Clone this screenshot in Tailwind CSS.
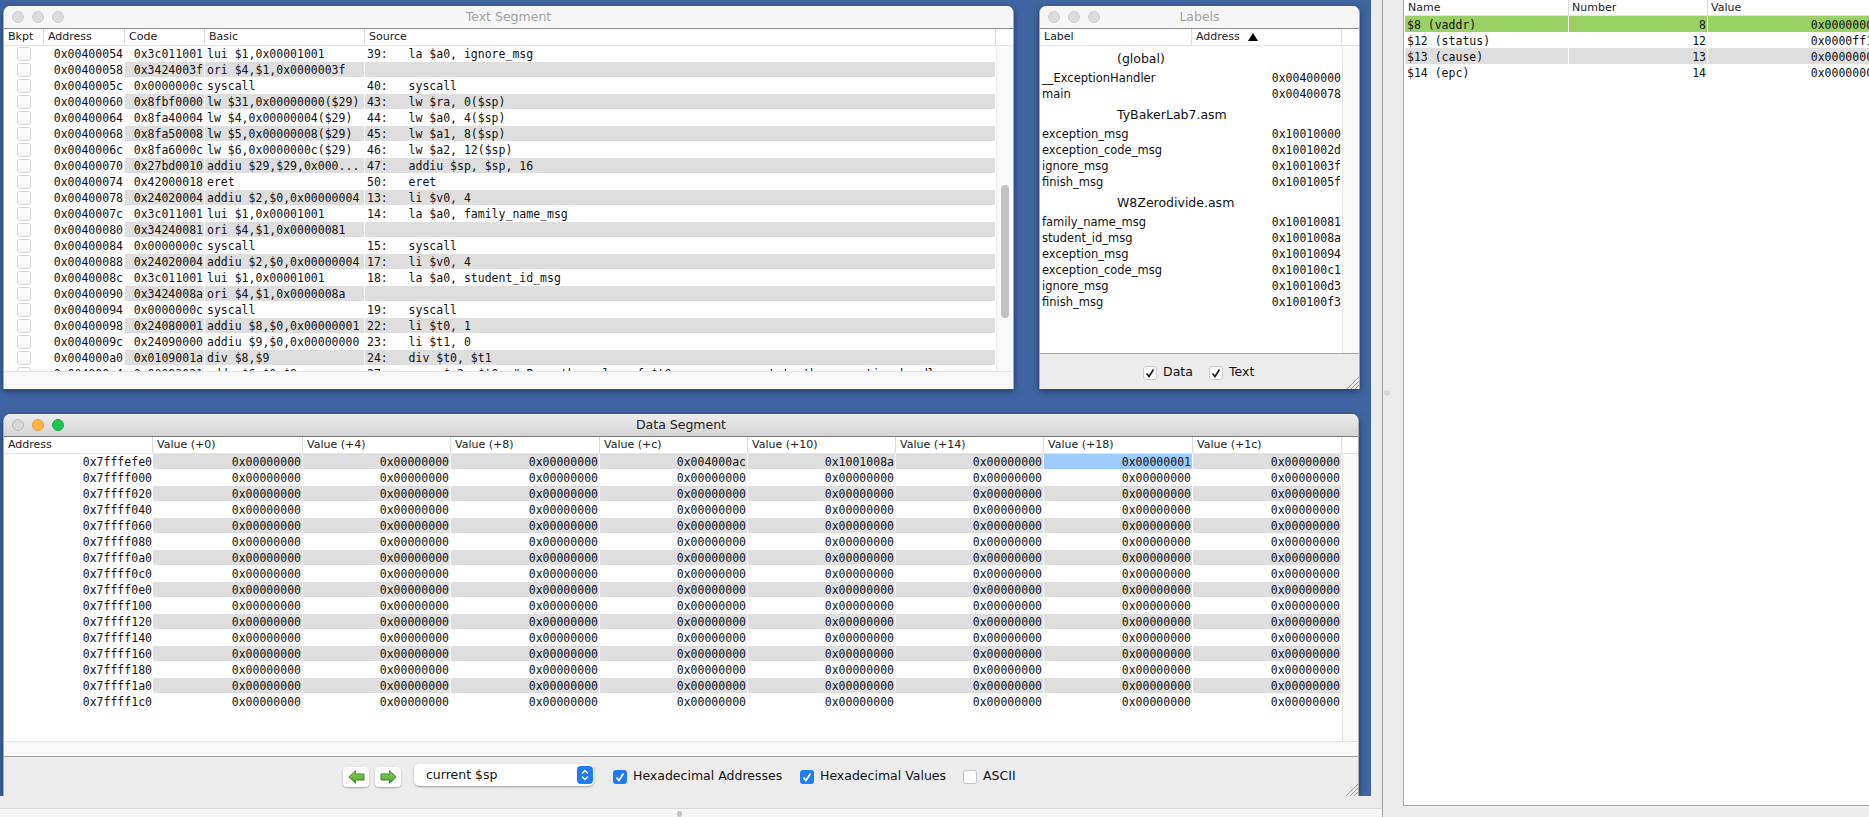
<!DOCTYPE html>
<html>
  <head>
    <meta charset="UTF-8" />
    <title>MARS</title>
    <script src="https://cdn.jsdelivr.net/npm/@tailwindcss/browser@4"></script>
  </head>
  <body class="bg-[#ececec] overflow-hidden">
    <div class="relative w-[1869px] h-[817px] flex font-['DejaVu_Sans',sans-serif] text-[#111]">
      <!-- left side: desktop pane and split bar below it -->
      <div class="w-[1383px] h-[817px] flex flex-col border-r border-[#9f9f9f]">
        <div id="desktop" class="relative w-[1371px] h-[796px] bg-[#3f66a3] overflow-hidden">

          <!-- Text Segment -->
          <section class="absolute left-[3px] top-[6px] w-[1011px] h-[383px] flex flex-col bg-white border-x border-[#a8a8a8] rounded-t-[7px] shadow-[0_2px_7px_rgba(0,0,0,0.45)] overflow-hidden">
            <header class="relative h-[23px] shrink-0 bg-[#f6f6f6] border-b border-[#8c8c8c] flex items-center justify-center text-[12.5px] text-[#a3a3a3]">
              <div class="absolute left-[8px] top-[5px] flex gap-2">
                <span class="w-3 h-3 rounded-full bg-[#dcdcdc] border border-[#cbcbcb]"></span>
                <span class="w-3 h-3 rounded-full bg-[#dcdcdc] border border-[#cbcbcb]"></span>
                <span class="w-3 h-3 rounded-full bg-[#dcdcdc] border border-[#cbcbcb]"></span>
              </div>
              Text Segment
            </header>
            <div class="h-[17px] shrink-0 flex border-b border-[#e4e4e4] text-[11px] leading-4 text-[#222]">
              <div class="w-[40px] pl-1 border-r border-[#dcdcdc]">Bkpt</div>
              <div class="w-[81px] pl-1 border-r border-[#dcdcdc]">Address</div>
              <div class="w-[80px] pl-1 border-r border-[#dcdcdc]">Code</div>
              <div class="w-[160px] pl-1 border-r border-[#dcdcdc]">Basic</div>
              <div class="w-[631px] pl-1 border-r border-[#dcdcdc]">Source</div>
            </div>
            <div class="relative h-[326px] shrink-0 overflow-hidden border-b border-[#e4e4e4]">
              <div id="textRows" class="w-[992px] font-['DejaVu_Sans_Mono',monospace] text-[11.5px] leading-4"></div>
              <div class="absolute right-0 top-0 bottom-0 w-[17px] bg-[#f9f9f9] border-l border-[#eeeeee]">
                <div class="absolute left-[4px] top-[139px] w-[8px] h-[133px] rounded bg-[#c2c2c2]"></div>
              </div>
            </div>
            <div class="flex-1 bg-[#f8f8f8]"></div>
          </section>

          <!-- Labels -->
          <section class="absolute left-[1039px] top-[6px] w-[321px] h-[383px] flex flex-col bg-white border-x border-[#a8a8a8] rounded-t-[7px] shadow-[0_2px_7px_rgba(0,0,0,0.45)] overflow-hidden">
            <header class="relative h-[23px] shrink-0 bg-[#f6f6f6] border-b border-[#8c8c8c] flex items-center justify-center text-[12.5px] text-[#a3a3a3]">
              <div class="absolute left-[8px] top-[5px] flex gap-2">
                <span class="w-3 h-3 rounded-full bg-[#dcdcdc] border border-[#cbcbcb]"></span>
                <span class="w-3 h-3 rounded-full bg-[#dcdcdc] border border-[#cbcbcb]"></span>
                <span class="w-3 h-3 rounded-full bg-[#dcdcdc] border border-[#cbcbcb]"></span>
              </div>
              Labels
            </header>
            <div class="h-[17px] shrink-0 flex border-b border-[#e4e4e4] text-[11px] leading-4 text-[#222]">
              <div class="w-[152px] pl-1 border-r border-[#dcdcdc]">Label</div>
              <div class="w-[150px] pl-1 border-r border-[#dcdcdc] flex items-center gap-2">Address <span class="w-0 h-0 border-x-[5px] border-x-transparent border-b-[8px] border-b-black"></span></div>
            </div>
            <div class="h-[308px] shrink-0 flex border-b border-[#a6a6a6]">
              <div id="labelRows" class="w-[303px] border-r border-[#e8e8e8] text-[11.5px] leading-4"></div>
              <div class="flex-1 bg-[#f9f9f9]"></div>
            </div>
            <div class="relative flex-1 bg-[#ececec] flex items-center pl-[103px] text-[12.5px] pt-[2px]">
              <span class="w-[14px] h-[14px] rounded-[3px] bg-white border border-[#c9c9c9] flex items-center justify-center">
                <svg viewBox="0 0 12 12" class="w-3 h-3"><path d="M2.5 6.5 L5 9.5 L9.5 2.5" fill="none" stroke="#222" stroke-width="1.7"/></svg>
              </span>
              <span class="ml-[6px] w-[40px]">Data</span>
              <span class="ml-[6px] w-[14px] h-[14px] rounded-[3px] bg-white border border-[#c9c9c9] flex items-center justify-center">
                <svg viewBox="0 0 12 12" class="w-3 h-3"><path d="M2.5 6.5 L5 9.5 L9.5 2.5" fill="none" stroke="#222" stroke-width="1.7"/></svg>
              </span>
              <span class="ml-[6px]">Text</span>
              <svg viewBox="0 0 12 12" class="absolute right-0 bottom-0 w-3 h-3"><path d="M0 12 L12 0 M4 12 L12 4 M8 12 L12 8" stroke="#9a9a9a" stroke-width="1"/></svg>
            </div>
          </section>

          <!-- Data Segment -->
          <section class="absolute left-[3px] top-[414px] w-[1356px] h-[382px] flex flex-col bg-white border-x border-[#a8a8a8] rounded-t-[7px] shadow-[0_2px_7px_rgba(0,0,0,0.45)] overflow-hidden">
            <header class="relative h-[23px] shrink-0 bg-gradient-to-b from-[#ededed] to-[#d4d4d4] border-b border-[#777] flex items-center justify-center text-[12.5px] text-[#222]">
              <div class="absolute left-[8px] top-[5px] flex gap-2">
                <span class="w-3 h-3 rounded-full bg-[#d6d6d6] border border-[#bcbcbc]"></span>
                <span class="w-3 h-3 rounded-full bg-[#fdb53f] border border-[#e5a136]"></span>
                <span class="w-3 h-3 rounded-full bg-[#1cc653] border border-[#18ae48]"></span>
              </div>
              Data Segment
            </header>
            <div class="h-[17px] shrink-0 grid grid-cols-[149px_150px_148px_149px_148px_148px_148px_149px_149px] border-b border-[#e4e4e4] text-[11px] leading-4 text-[#222]">
              <div class="pl-1 border-r border-[#dcdcdc]">Address</div>
              <div class="pl-1 border-r border-[#dcdcdc]">Value (+0)</div>
              <div class="pl-1 border-r border-[#dcdcdc]">Value (+4)</div>
              <div class="pl-1 border-r border-[#dcdcdc]">Value (+8)</div>
              <div class="pl-1 border-r border-[#dcdcdc]">Value (+c)</div>
              <div class="pl-1 border-r border-[#dcdcdc]">Value (+10)</div>
              <div class="pl-1 border-r border-[#dcdcdc]">Value (+14)</div>
              <div class="pl-1 border-r border-[#dcdcdc]">Value (+18)</div>
              <div class="pl-1 border-r border-[#dcdcdc]">Value (+1c)</div>
            </div>
            <div class="h-[288px] shrink-0 flex border-b border-[#e4e4e4]">
              <div id="dataRows" class="w-[1339px] border-r border-[#e4e4e4] font-['DejaVu_Sans_Mono',monospace] text-[11.5px] leading-4"></div>
              <div class="flex-1 bg-[#f9f9f9]"></div>
            </div>
            <div class="h-[15px] shrink-0 bg-[#f8f8f8] border-b border-[#a6a6a6]"></div>
            <div class="relative flex-1 bg-[#ececec] flex items-center pl-[339px] text-[12.5px]">
              <button class="mt-px w-[26px] h-[20px] rounded-[4px] bg-white shadow-[0_1px_2px_rgba(0,0,0,0.3)] flex items-center justify-center">
                <svg viewBox="0 0 17 14" class="w-[17px] h-[14px]"><defs><linearGradient id="arrowLeft" x1="0" y1="0" x2="0" y2="1"><stop offset="0" stop-color="#93d263"/><stop offset="1" stop-color="#4f9f2d"/></linearGradient></defs><path d="M0.8 7 L7.5 0.8 V4 H16 V10 H7.5 V13.2 Z" fill="url(#arrowLeft)" stroke="#3f8a25" stroke-width="1"/></svg>
              </button>
              <button class="mt-px ml-[6px] w-[26px] h-[20px] rounded-[4px] bg-white shadow-[0_1px_2px_rgba(0,0,0,0.3)] flex items-center justify-center">
                <svg viewBox="0 0 17 14" class="w-[17px] h-[14px]"><defs><linearGradient id="arrowRight" x1="0" y1="0" x2="0" y2="1"><stop offset="0" stop-color="#93d263"/><stop offset="1" stop-color="#4f9f2d"/></linearGradient></defs><path d="M16.2 7 L9.5 0.8 V4 H1 V10 H9.5 V13.2 Z" fill="url(#arrowRight)" stroke="#3f8a25" stroke-width="1"/></svg>
              </button>
              <div class="relative ml-[13px] -mt-[3px] w-[180px] h-[22px] rounded-[5px] bg-white shadow-[0_1px_2px_rgba(0,0,0,0.35)] pl-[12px] leading-[22px]">
                current $sp
                <span class="absolute right-[1px] top-[2px] w-[16px] h-[18px] rounded-[4px] bg-[#1e7cf5] flex items-center justify-center">
                  <svg viewBox="0 0 10 14" class="w-[10px] h-[14px]"><path d="M2 5.5 L5 2.5 L8 5.5 M2 8.5 L5 11.5 L8 8.5" fill="none" stroke="white" stroke-width="1.5"/></svg>
                </span>
              </div>
              <span class="ml-[19px] w-[14px] h-[14px] rounded-[3px] bg-[#1e7cf5] flex items-center justify-center">
                <svg viewBox="0 0 12 12" class="w-3 h-3"><path d="M2.5 6.5 L5 9.5 L9.5 2.5" fill="none" stroke="white" stroke-width="1.7"/></svg>
              </span>
              <span class="ml-[6px] w-[167px] whitespace-nowrap">Hexadecimal Addresses</span>
              <span class="w-[14px] h-[14px] rounded-[3px] bg-[#1e7cf5] flex items-center justify-center">
                <svg viewBox="0 0 12 12" class="w-3 h-3"><path d="M2.5 6.5 L5 9.5 L9.5 2.5" fill="none" stroke="white" stroke-width="1.7"/></svg>
              </span>
              <span class="ml-[6px] w-[143px] whitespace-nowrap">Hexadecimal Values</span>
              <span class="w-[14px] h-[14px] rounded-[3px] bg-white border border-[#c4c4c4]"></span>
              <span class="ml-[6px]">ASCII</span>
              <svg viewBox="0 0 12 12" class="absolute right-0 bottom-0 w-3 h-3"><path d="M0 12 L12 0 M4 12 L12 4 M8 12 L12 8" stroke="#9a9a9a" stroke-width="1"/></svg>
            </div>
          </section>
        </div>
        <div class="h-[13px] border-b border-[#d9d9d9]"></div>
        <div class="relative flex-1 bg-[#f5f5f5]">
          <span class="absolute left-[677px] top-[2px] w-[5px] h-[6px] rounded-full bg-[#c4c4c4]"></span>
        </div>
      </div>
      <span class="absolute left-[1384px] top-[390px] w-[6px] h-[6px] rounded-full bg-[#d6d6d6]"></span>

      <!-- right side: coprocessor 0 registers -->
      <div class="ml-[20px] flex-1 h-[806px] pl-px bg-white border-l border-b border-[#a9a9a9] overflow-hidden">
        <div class="h-[16px] grid grid-cols-[164px_139px_174px] w-[477px] text-[11px] leading-4 text-[#222] border-b border-[#e4e4e4]">
          <div class="pl-[3px] border-r border-[#dcdcdc]">Name</div>
          <div class="pl-[3px] border-r border-[#dcdcdc]">Number</div>
          <div class="pl-[3px]">Value</div>
        </div>
        <div id="regRows" class="w-[477px] font-['DejaVu_Sans_Mono',monospace] text-[11.5px] leading-[18px]"></div>
      </div>
    </div>

    <script>
const textRows = [
  ['0x00400054', '0x3c011001', 'lui $1,0x00001001', '39:   la $a0, ignore_msg'],
  ['0x00400058', '0x3424003f', 'ori $4,$1,0x0000003f', ''],
  ['0x0040005c', '0x0000000c', 'syscall', '40:   syscall'],
  ['0x00400060', '0x8fbf0000', 'lw $31,0x00000000($29)', '43:   lw $ra, 0($sp)'],
  ['0x00400064', '0x8fa40004', 'lw $4,0x00000004($29)', '44:   lw $a0, 4($sp)'],
  ['0x00400068', '0x8fa50008', 'lw $5,0x00000008($29)', '45:   lw $a1, 8($sp)'],
  ['0x0040006c', '0x8fa6000c', 'lw $6,0x0000000c($29)', '46:   lw $a2, 12($sp)'],
  ['0x00400070', '0x27bd0010', 'addiu $29,$29,0x000...', '47:   addiu $sp, $sp, 16'],
  ['0x00400074', '0x42000018', 'eret', '50:   eret'],
  ['0x00400078', '0x24020004', 'addiu $2,$0,0x00000004', '13:   li $v0, 4'],
  ['0x0040007c', '0x3c011001', 'lui $1,0x00001001', '14:   la $a0, family_name_msg'],
  ['0x00400080', '0x34240081', 'ori $4,$1,0x00000081', ''],
  ['0x00400084', '0x0000000c', 'syscall', '15:   syscall'],
  ['0x00400088', '0x24020004', 'addiu $2,$0,0x00000004', '17:   li $v0, 4'],
  ['0x0040008c', '0x3c011001', 'lui $1,0x00001001', '18:   la $a0, student_id_msg'],
  ['0x00400090', '0x3424008a', 'ori $4,$1,0x0000008a', ''],
  ['0x00400094', '0x0000000c', 'syscall', '19:   syscall'],
  ['0x00400098', '0x24080001', 'addiu $8,$0,0x00000001', '22:   li $t0, 1'],
  ['0x0040009c', '0x24090000', 'addiu $9,$0,0x00000000', '23:   li $t1, 0'],
  ['0x004000a0', '0x0109001a', 'div $8,$9', '24:   div $t0, $t1'],
  ['0x004000a4', '0x00083021', 'addu $6,$0,$8', '27:   move $a2, $t0  # Pass the value of $t0 as an argument to the exception handler'],
];

document.getElementById('textRows').innerHTML = textRows
  .map(([addr, code, basic, src], i) => {
    const bg = i % 2 ? 'bg-[#dedede]' : 'bg-white';
    const cell = `h-4 border-r border-b border-white whitespace-pre overflow-hidden ${bg}`;
    return `<div class="flex h-4">
      <div class="w-[40px] flex justify-center pt-px"><span class="ml-[-1px] w-[14px] h-[14px] rounded-[3px] border border-[#d2d2d2] bg-white"></span></div>
      <div class="w-[81px] text-right pr-[2px]">${addr}</div>
      <div class="w-[80px] text-right pr-px ${cell}">${code}</div>
      <div class="w-[160px] pl-[2px] ${cell}">${basic}</div>
      <div class="w-[631px] pl-[2px] ${cell}">${src}</div>
    </div>`;
  })
  .join('');

const labelGroups = [
  ['(global)', [['__ExceptionHandler', '0x00400000'], ['main', '0x00400078']]],
  ['TyBakerLab7.asm', [['exception_msg', '0x10010000'], ['exception_code_msg', '0x1001002d'], ['ignore_msg', '0x1001003f'], ['finish_msg', '0x1001005f']]],
  ['W8Zerodivide.asm', [['family_name_msg', '0x10010081'], ['student_id_msg', '0x1001008a'], ['exception_msg', '0x10010094'], ['exception_code_msg', '0x100100c1'], ['ignore_msg', '0x100100d3'], ['finish_msg', '0x100100f3']]],
];

document.getElementById('labelRows').innerHTML = labelGroups
  .map(([group, rows]) => {
    const body = rows
      .map(([name, addr]) => `<div class="flex justify-between h-4 pl-[2px] pr-px"><span>${name}</span><span class="font-['DejaVu_Sans_Mono',monospace]">${addr}</span></div>`)
      .join('');
    return `<div class="h-6 pt-[5px] pl-[77px] text-[12.5px]">${group}</div>${body}`;
  })
  .join('');

const dataAddrs = ['0x7fffefe0', '0x7ffff000', '0x7ffff020', '0x7ffff040', '0x7ffff060', '0x7ffff080', '0x7ffff0a0', '0x7ffff0c0', '0x7ffff0e0', '0x7ffff100', '0x7ffff120', '0x7ffff140', '0x7ffff160', '0x7ffff180', '0x7ffff1a0', '0x7ffff1c0'];
const firstRow = ['0x00000000', '0x00000000', '0x00000000', '0x004000ac', '0x1001008a', '0x00000000', '0x00000001', '0x00000000'];

document.getElementById('dataRows').innerHTML = dataAddrs
  .map((addr, i) => {
    const vals = i === 0 ? firstRow : Array(8).fill('0x00000000');
    const cells = vals
      .map((v, j) => {
        const bg = i === 0 && j === 6 ? 'bg-[#9dcbfb]' : i % 2 ? 'bg-white' : 'bg-[#dedede]';
        return `<div class="h-4 text-right pr-px border-r border-b border-white ${bg}">${v}</div>`;
      })
      .join('');
    return `<div class="grid grid-cols-[149px_150px_148px_149px_148px_148px_148px_149px_149px] h-4"><div class="text-right pr-px">${addr}</div>${cells}</div>`;
  })
  .join('');

const regs = [
  ['$8 (vaddr)', '8', '0x00000000', 'bg-[#9ad164]'],
  ['$12 (status)', '12', '0x0000ff11', 'bg-white'],
  ['$13 (cause)', '13', '0x00000000', 'bg-[#dedede]'],
  ['$14 (epc)', '14', '0x00000000', 'bg-white'],
];

document.getElementById('regRows').innerHTML = regs
  .map(([name, num, val, bg]) => `<div class="grid grid-cols-[164px_139px_174px] h-4">
      <div class="pl-[2px] border-r border-b border-white ${bg}">${name}</div>
      <div class="text-right pr-px border-r border-b border-white ${bg}">${num}</div>
      <div class="text-right pr-[2px] border-b border-white ${bg}">${val}</div>
    </div>`)
  .join('');
</script>
  </body>
</html>
